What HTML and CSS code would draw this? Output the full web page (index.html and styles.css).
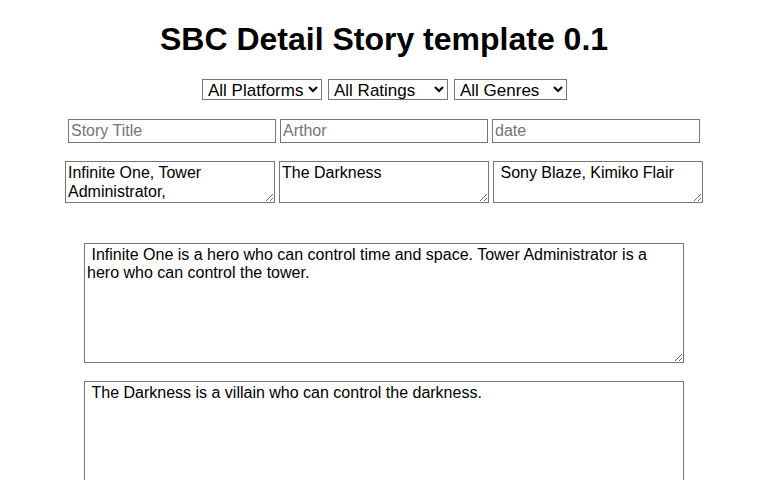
FILE: index.html
```html
<!DOCTYPE html>
<html>
<head>
<meta charset="utf-8">
<link rel="stylesheet" href="styles.css">
</head>
<body>
<h1 class="title">SBC Detail Story template 0.1</h1>
<div class="filters">
  <select class="sel sel-platform"><option>All Platforms</option></select>
  <select class="sel sel-rating"><option>All Ratings</option></select>
  <select class="sel sel-genre"><option>All Genres</option></select>
</div>
<div class="row inputs">
  <input class="field" type="text" placeholder="Story Title">
  <input class="field" type="text" placeholder="Arthor">
  <input class="field" type="text" placeholder="date">
</div>
<div class="row areas">
  <textarea class="small">Infinite One, Tower Administrator,</textarea>
  <textarea class="small">The Darkness</textarea>
  <textarea class="small"> Sony Blaze, Kimiko Flair</textarea>
</div>
<div class="big-list">
  <textarea class="big"> Infinite One is a hero who can control time and space. Tower Administrator is a hero who can control the tower.</textarea>
  <textarea class="big"> The Darkness is a villain who can control the darkness.</textarea>
</div>
</body>
</html>
```
FILE: styles.css
```css
html, body {
  margin: 0;
  padding: 0;
  background: #fff;
}
body {
  font-family: "Liberation Sans", Arial, sans-serif;
  color: #000;
  padding-top: 1px;
}
.title {
  font-size: 32px;
  font-weight: bold;
  text-align: center;
  margin: 20px 0 21px;
  line-height: 37px;
}
.filters {
  display: flex;
  justify-content: center;
  gap: 6px;
  margin-left: 1px;
}
.sel {
  font-family: "Liberation Sans", Arial, sans-serif;
  font-size: 17px;
  height: 21px;
  padding: 0 0 0 1px;
  border: 1px solid #767676;
  border-radius: 0;
  background: #fff;
  color: #000;
  box-sizing: border-box;
}
.sel-platform { width: 120px; }
.sel-rating { width: 120px; }
.sel-genre { width: 113px; }
.row {
  display: flex;
  justify-content: center;
  gap: 4px;
}
.inputs {
  margin-top: 19px;
}
.field {
  font-family: "Liberation Sans", Arial, sans-serif;
  font-size: 16px;
  width: 208px;
  height: 24px;
  box-sizing: border-box;
  padding: 1px 2px;
  border: 1px solid #767676;
  margin: 0;
}
.field::placeholder {
  color: #757575;
}
.areas {
  margin-top: 18px;
}
.small {
  font-family: "Liberation Sans", Arial, sans-serif;
  font-size: 16px;
  line-height: 19px;
  width: 210px;
  height: 42px;
  box-sizing: border-box;
  padding: 1px 2px;
  border: 1px solid #767676;
  margin: 0;
  overflow: hidden;
}
.big-list {
  display: flex;
  flex-direction: column;
  align-items: center;
  gap: 18px;
  margin-top: 40px;
}
.big {
  font-family: "Liberation Sans", Arial, sans-serif;
  font-size: 16px;
  line-height: 18px;
  width: 600px;
  height: 120px;
  box-sizing: border-box;
  padding: 2px 2px;
  border: 1px solid #767676;
  margin: 0;
  overflow: hidden;
}
```
